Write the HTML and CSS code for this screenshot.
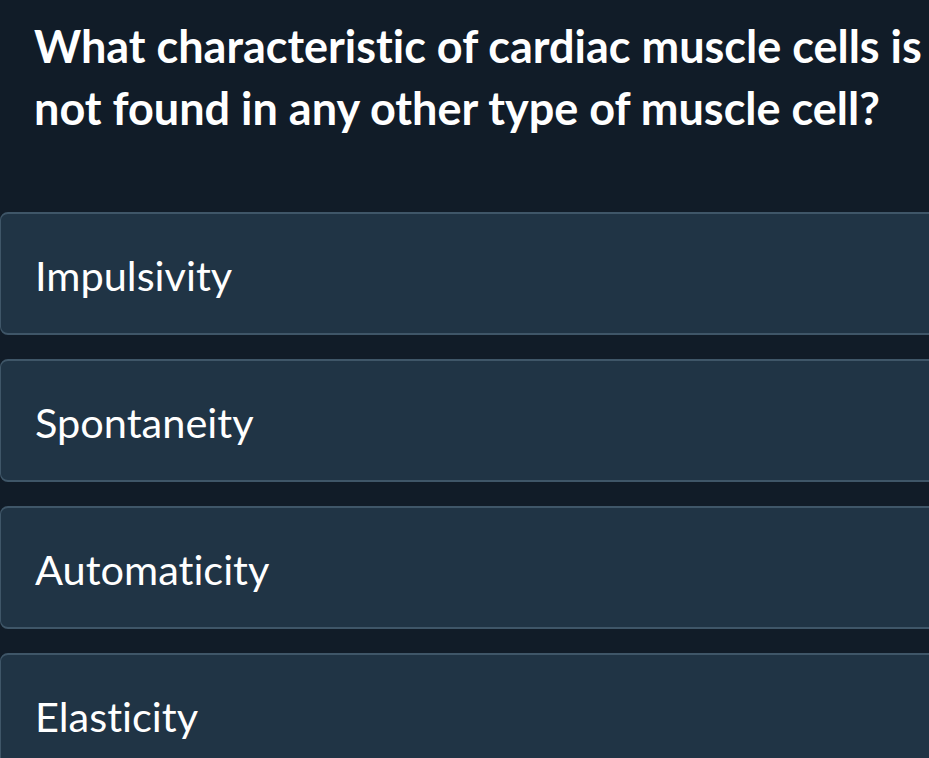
FILE: index.html
```html
<!DOCTYPE html>
<html lang="en">
<head>
    <meta charset="UTF-8">
    <meta name="viewport" content="width=device-width, initial-scale=1.0">
    <title>Quiz</title>
    <link rel="stylesheet" href="styles.css">
</head>
<body>
    <div class="quiz">
        <h1 class="question">What characteristic of cardiac muscle cells is<br>not found in any other type of muscle cell?</h1>

        <div class="answers">
            <div class="answer">Impulsivity</div>
            <div class="answer">Spontaneity</div>
            <div class="answer">Automaticity</div>
            <div class="answer">Elasticity</div>
        </div>
    </div>
</body>
</html>
```

FILE: styles.css
```css
* {
    margin: 0;
    padding: 0;
    box-sizing: border-box;
    font-family: 'Lato', 'Noto Sans', Arial, sans-serif;
    font-variant-ligatures: none;
}

body {
    background-color: #111c28;
    color: #ffffff;
    overflow: hidden;
    height: 100vh;
}

.quiz {
    display: flex;
    flex-direction: column;
}

.question {
    font-size: 45px;
    font-weight: 700;
    line-height: 62px;
    padding: 15px 0 0 34px;
    height: 212px;
    white-space: nowrap;
}

.answers {
    display: flex;
    flex-direction: column;
    gap: 24px;
    width: calc(100% + 20px);
}

.answer {
    height: 123px;
    display: flex;
    align-items: center;
    padding: 2px 0 0 34px;
    background-color: #203445;
    border: 1px solid #3f5668;
    border-top-width: 2px;
    border-bottom-width: 2px;
    border-radius: 8px;
    font-size: 41.5px;
    font-weight: 400;
}
```
